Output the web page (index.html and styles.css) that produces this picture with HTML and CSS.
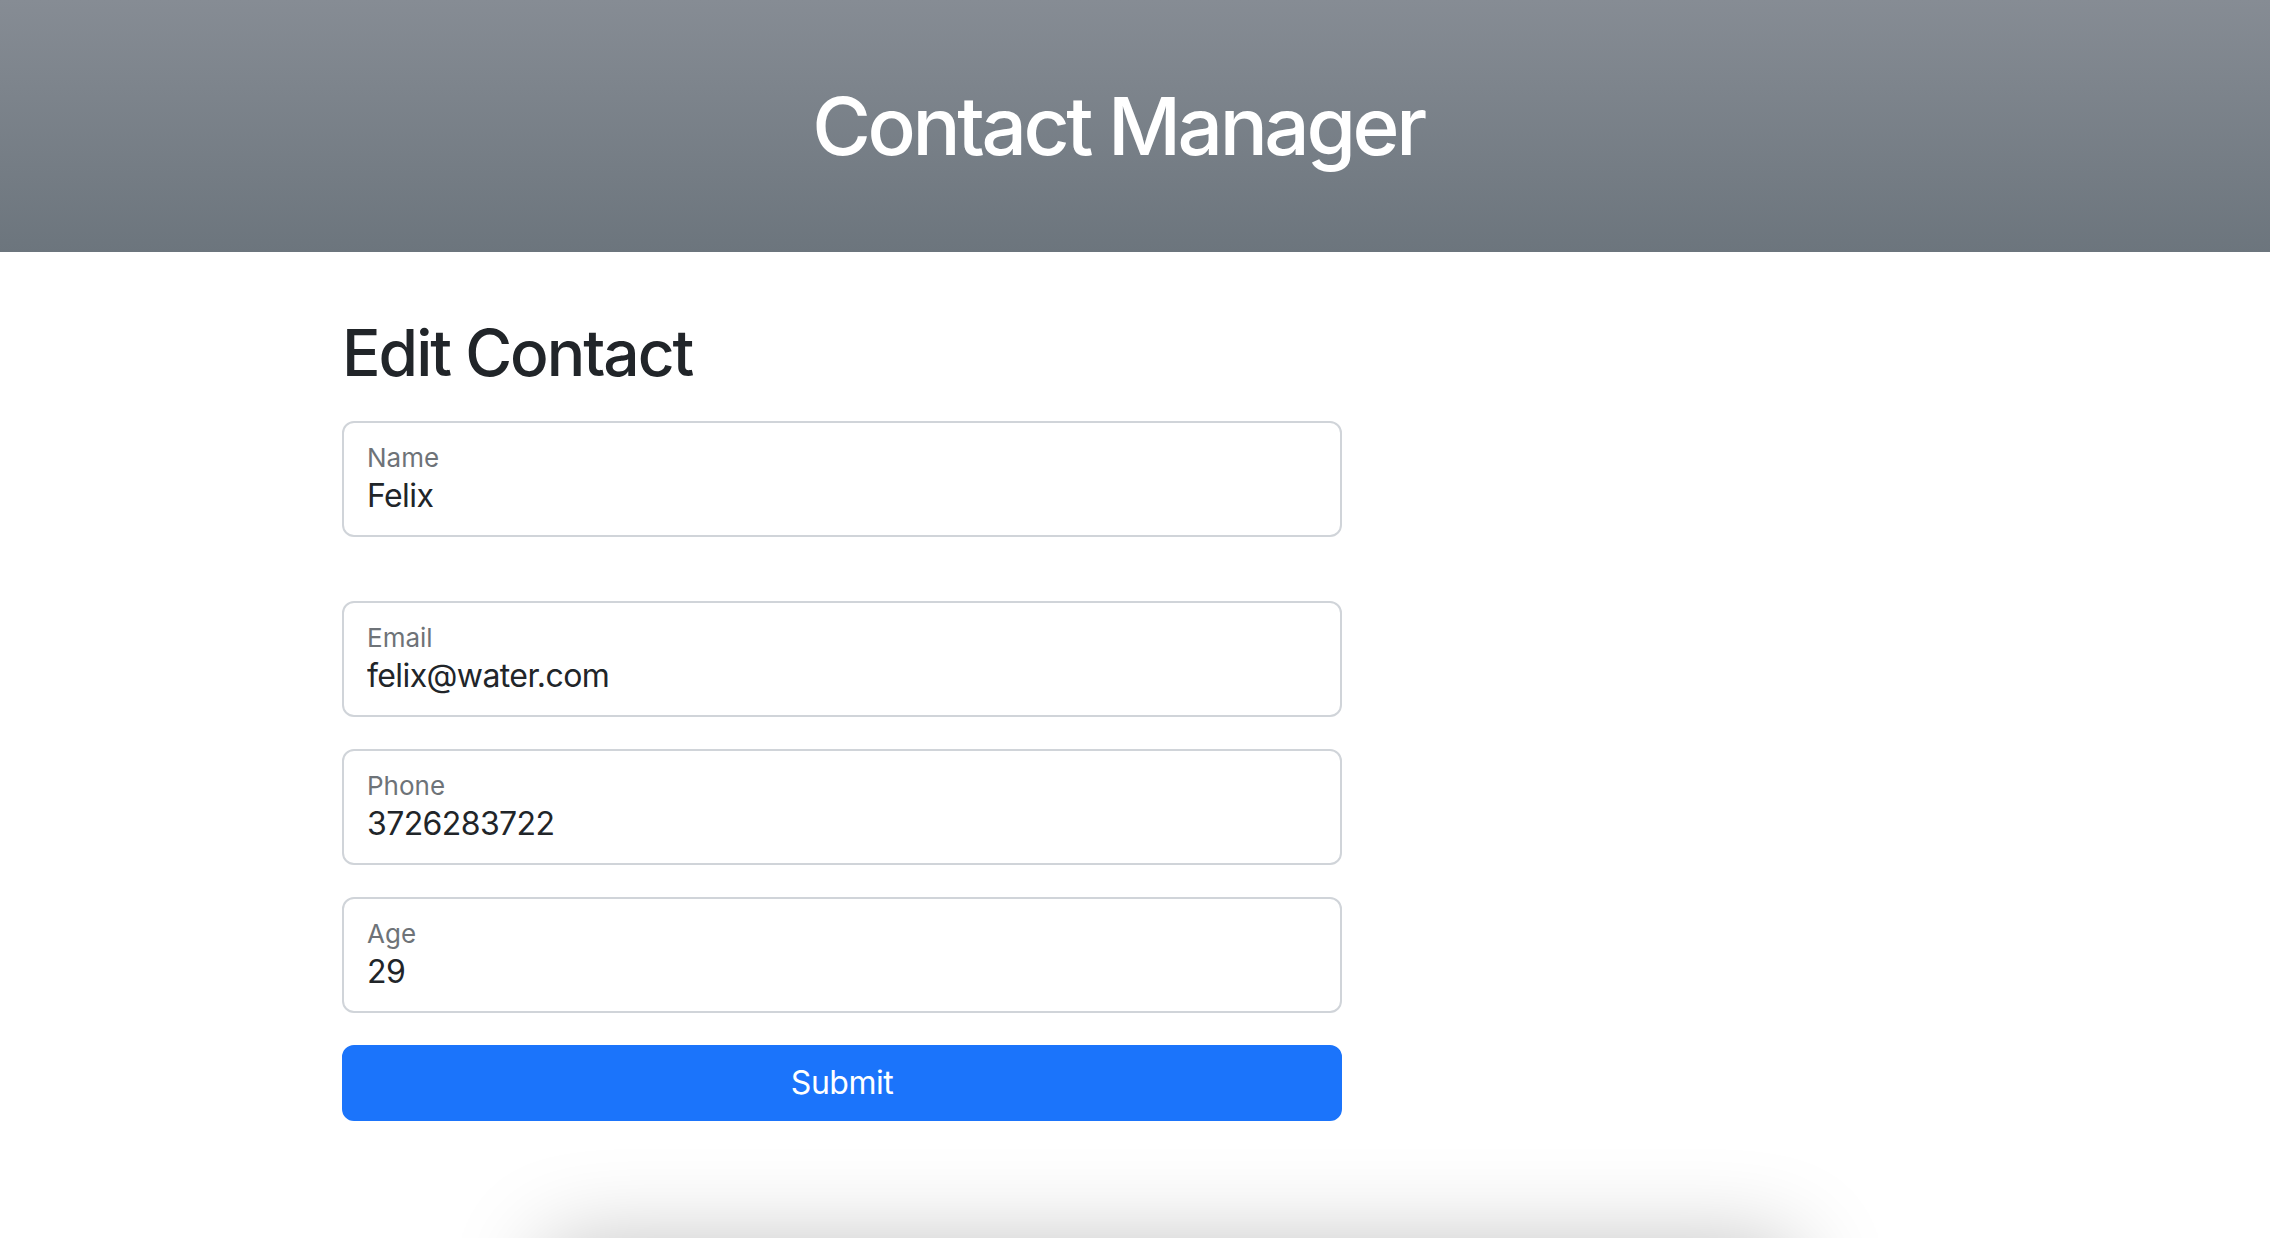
FILE: index.html
```html
<!DOCTYPE html>
<html lang="en">
<head>
<meta charset="utf-8">
<title>Contact Manager</title>
<link rel="stylesheet" href="styles.css">
</head>
<body>
<header class="app-header">
  <div class="gutter">
    <div class="container">
      <h1 class="app-title">Contact Manager</h1>
    </div>
  </div>
</header>
<main class="gutter">
  <div class="container">
    <section class="edit-panel">
      <h2 class="panel-title">Edit Contact</h2>
      <form class="contact-form">
        <div class="field field--spaced">
          <label class="field-label" for="name">Name</label>
          <input class="field-input" id="name" type="text" value="Felix">
        </div>
        <div class="field">
          <label class="field-label" for="email">Email</label>
          <input class="field-input" id="email" type="email" value="felix@water.com">
        </div>
        <div class="field">
          <label class="field-label" for="phone">Phone</label>
          <input class="field-input" id="phone" type="text" value="3726283722">
        </div>
        <div class="field">
          <label class="field-label" for="age">Age</label>
          <input class="field-input" id="age" type="text" value="29">
        </div>
        <button class="btn-submit" type="button">Submit</button>
      </form>
    </section>
    <div class="list-card"></div>
  </div>
</main>
</body>
</html>
```

FILE: styles.css
```css
html, body {
  margin: 0;
  overflow: hidden;
}
body {
  font-family: Inter, "Noto Sans", "Liberation Sans", sans-serif;
  color: #212529;
  background: #fff;
}
.gutter {
  padding-right: 34px;
}
.container {
  max-width: 1920px;
  margin: 0 auto;
  padding: 0 24px;
  box-sizing: border-box;
}
.app-header {
  background: linear-gradient(180deg, #868c94 0%, #6c757d 100%);
  padding: 78px 0;
}
.app-title {
  margin: 0;
  font-size: 80px;
  line-height: 96px;
  font-weight: 500;
  letter-spacing: -3.4px;
  color: #fff;
  text-align: center;
}
.edit-panel {
  width: 1000px;
  margin-left: 160px;
  padding-top: 62px;
}
.panel-title {
  margin: 0 0 30px;
  font-size: 64px;
  line-height: 77px;
  font-weight: 500;
  letter-spacing: -2px;
  color: #212529;
}
.contact-form {
  margin: 0;
}
.field {
  border: 2px solid #d0d4d9;
  border-radius: 12px;
  padding: 19.5px 23px;
  margin-bottom: 32px;
  background: #fff;
}
.field--spaced {
  margin-bottom: 64px;
}
.field-label {
  display: block;
  font-size: 26px;
  line-height: 30px;
  color: #6e7378;
  margin-bottom: 3px;
}
.field-input {
  display: block;
  width: 100%;
  height: 40px;
  border: 0;
  padding: 0;
  margin: 0;
  font-family: inherit;
  font-size: 32px;
  line-height: 40px;
  letter-spacing: -0.6px;
  color: #212529;
  background: transparent;
  outline: none;
}
.btn-submit {
  display: block;
  width: 100%;
  height: 76px;
  box-sizing: border-box;
  border: 2px solid #1b74fb;
  border-radius: 12px;
  background: #1b74fb;
  color: #fff;
  font-family: inherit;
  font-size: 32px;
  line-height: 48px;
  letter-spacing: -0.5px;
  padding: 12px 24px;
}
.list-card {
  margin-top: 122px;
  margin-left: 362px;
  width: 1252px;
  height: 600px;
  border-radius: 24px;
  background: #fff;
  box-shadow: 0 0 90px rgba(0, 0, 0, 0.25);
}
```
